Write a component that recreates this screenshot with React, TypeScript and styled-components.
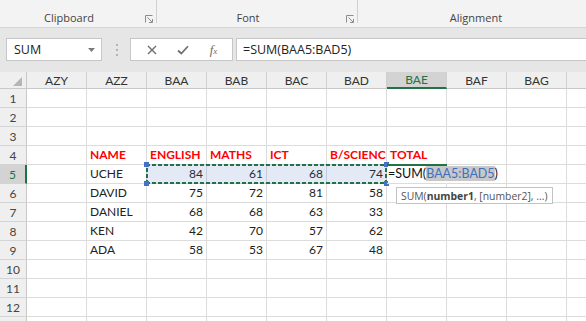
import styled, { createGlobalStyle } from "styled-components";

const GREEN = "#217346";
const GRID = "#dcdcdc";

const GlobalStyle = createGlobalStyle`
  html, body { margin: 0; padding: 0; }
  body {
    width: 586px;
    height: 321px;
    overflow: hidden;
    background: #ffffff;
    font-family: Lato, "Liberation Sans", sans-serif;
  }
`;

const Window = styled.div`
  width: 586px;
  height: 321px;
  overflow: hidden;
  display: flex;
  flex-direction: column;
  background: #e6e6e6;
`;

const Ribbon = styled.div`
  flex: 0 0 28px;
  box-sizing: border-box;
  display: flex;
  background: #f3f3f3;
  border-bottom: 1px solid #d5d5d5;
  font-family: "Open Sans", "Liberation Sans", sans-serif;
  font-size: 11px;
  color: #444;
`;

const Group = styled.div<{ $width: number }>`
  flex: 0 0 ${(p) => p.$width}px;
  position: relative;
  box-sizing: border-box;
  display: flex;
  align-items: flex-end;
  justify-content: center;
  padding: 0 18px 2px 0;
`;

const GroupDivider = styled.div`
  flex: 0 0 1px;
  height: 23px;
  background: #d0d0d0;
`;

const Launcher = styled.svg`
  position: absolute;
  right: 3px;
  bottom: 4px;
`;

const FormulaBand = styled.div`
  flex: 0 0 44px;
  box-sizing: border-box;
  display: flex;
  align-items: center;
  padding: 10px 0 11px 6px;
  font-family: "Open Sans", "Liberation Sans", sans-serif;
  font-size: 12.5px;
  color: #222;
`;

const NameBox = styled.div`
  flex: 0 0 96px;
  height: 23px;
  box-sizing: border-box;
  display: flex;
  align-items: center;
  justify-content: space-between;
  padding: 0 6px 0 7px;
  background: #fff;
  border: 1px solid #c6c6c6;
`;

const Dots = styled.div`
  display: flex;
  flex-direction: column;
  gap: 3px;
  margin: 0 12px 0 14px;
  span {
    width: 2px;
    height: 2px;
    background: #b4b4b4;
  }
`;

const ButtonBox = styled.div`
  flex: 0 0 103px;
  height: 23px;
  box-sizing: border-box;
  display: flex;
  align-items: center;
  padding-left: 5px;
  background: #fff;
  border: 1px solid #c6c6c6;
`;

const IconSlot = styled.div`
  flex: 0 0 31px;
  display: flex;
  align-items: center;
  justify-content: center;
  color: #6d6d6d;
`;

const Fx = styled.span`
  font-family: "Liberation Serif", serif;
  font-style: italic;
  font-size: 13px;
  color: #6d6d6d;
  small {
    font-size: 9px;
  }
`;

const FormulaInput = styled.div`
  flex: 1;
  height: 23px;
  box-sizing: border-box;
  display: flex;
  align-items: center;
  margin-left: 3px;
  padding-left: 6px;
  background: #fff;
  border: 1px solid #c6c6c6;
  border-right: none;
  white-space: nowrap;
`;

const Sheet = styled.div`
  flex: 1;
  position: relative;
  display: grid;
  grid-template-columns: 27px repeat(10, 60px);
  grid-template-rows: 17px repeat(13, 19px);
  background: #fff;
  overflow: hidden;
  font-family: Lato, "Liberation Sans", sans-serif;
  font-size: 12px;
`;

const Corner = styled.div`
  position: relative;
  background: #efefef;
  border-right: 1px solid #c8c8c8;
  border-bottom: 1px solid #c8c8c8;
  &::after {
    content: "";
    position: absolute;
    right: 4px;
    bottom: 2px;
    width: 9px;
    height: 9px;
    background: #b5b5b5;
    clip-path: polygon(100% 0, 100% 100%, 0 100%);
  }
`;

const ColHead = styled.div<{ $active?: boolean }>`
  box-sizing: border-box;
  display: flex;
  align-items: center;
  justify-content: center;
  background: ${(p) => (p.$active ? "#d3d3d3" : "#efefef")};
  color: ${(p) => (p.$active ? GREEN : "#333")};
  border-right: 1px solid #cfcfcf;
  border-bottom: ${(p) => (p.$active ? `2px solid ${GREEN}` : "1px solid #c8c8c8")};
`;

const RowHead = styled.div<{ $active?: boolean }>`
  box-sizing: border-box;
  display: flex;
  align-items: center;
  justify-content: center;
  padding-top: 1px;
  background: ${(p) => (p.$active ? "#d3d3d3" : "#efefef")};
  color: ${(p) => (p.$active ? GREEN : "#444")};
  border-right: ${(p) => (p.$active ? `2px solid ${GREEN}` : "1px solid #c8c8c8")};
  border-bottom: 1px solid #d4d4d4;
`;

const Cell = styled.div<{ $align?: "left" | "right"; $label?: boolean }>`
  box-sizing: border-box;
  padding: 0 3px;
  line-height: 18px;
  border-right: 1px solid ${GRID};
  border-bottom: 1px solid ${GRID};
  white-space: nowrap;
  overflow: hidden;
  text-align: ${(p) => p.$align ?? "left"};
  color: ${(p) => (p.$label ? "#ff0000" : "#222")};
  font-weight: ${(p) => (p.$label ? 700 : 400)};
`;

const EditCell = styled(Cell)`
  position: relative;
  overflow: visible;
  z-index: 3;
  padding-left: 1px;
  border-right-color: transparent;
  &::before {
    content: "";
    position: absolute;
    top: -1px;
    left: 0;
    width: 60px;
    height: 2px;
    background: ${GREEN};
  }
`;

const EditText = styled.span`
  display: inline-block;
  background: #fff;
  font-size: 12.5px;
  line-height: 18px;
  color: #111;
  padding-right: 2px;
`;

const RefText = styled.span`
  color: #3f6fc0;
  background: #c8c8c8;
`;

const Tooltip = styled.div`
  position: absolute;
  top: 22px;
  left: 9px;
  height: 17px;
  box-sizing: border-box;
  padding: 0 4px;
  display: flex;
  align-items: center;
  background: #fff;
  border: 1px solid #c2c2c2;
  font-family: "Open Sans", "Liberation Sans", sans-serif;
  font-size: 10.4px;
  font-weight: 400;
  color: #555;
  white-space: nowrap;
  b {
    font-weight: 700;
    color: #444;
  }
`;

const Selection = styled.div`
  position: absolute;
  grid-column: 4 / 8;
  grid-row: 6 / 7;
  top: -1px;
  left: -1px;
  right: 0;
  bottom: 0;
  z-index: 2;
  pointer-events: none;
  background:
    repeating-linear-gradient(90deg, ${GREEN} 0 4px, transparent 4px 6px) top / 100% 2px no-repeat,
    repeating-linear-gradient(90deg, ${GREEN} 0 4px, transparent 4px 6px) bottom / 100% 2px no-repeat,
    repeating-linear-gradient(0deg, ${GREEN} 0 4px, transparent 4px 6px) left / 2px 100% no-repeat,
    repeating-linear-gradient(0deg, ${GREEN} 0 4px, transparent 4px 6px) right / 2px 100% no-repeat,
    rgba(68, 114, 196, 0.15);
`;

const Handle = styled.span<{ $x: "left" | "right"; $y: "top" | "bottom" }>`
  position: absolute;
  width: 5px;
  height: 5px;
  background: #4472c4;
  ${(p) => p.$x}: -2px;
  ${(p) => p.$y}: -2px;
`;

const columns = ["AZY", "AZZ", "BAA", "BAB", "BAC", "BAD", "BAE", "BAF", "BAG", ""];
const headings = ["NAME", "ENGLISH", "MATHS", "ICT", "B/SCIENCE", "TOTAL"];
const students: [string, number[]][] = [
  ["UCHE", [84, 61, 68, 74]],
  ["DAVID", [75, 72, 81, 58]],
  ["DANIEL", [68, 68, 63, 33]],
  ["KEN", [42, 70, 57, 62]],
  ["ADA", [58, 53, 67, 48]],
];

function LauncherIcon() {
  return (
    <Launcher width="8" height="8" viewBox="0 0 8 8" fill="none" stroke="#8c8c8c" strokeWidth="1">
      <path d="M0.5 7.5V0.5H7.5" />
      <path d="M2.5 2.5L7 7" />
      <path d="M7.5 4V7.5H4" />
    </Launcher>
  );
}

function renderCell(row: number, col: number) {
  const key = `${row}-${col}`;
  if (row === 4 && col >= 1 && col <= 6) {
    return (
      <Cell key={key} $label>
        {headings[col - 1]}
      </Cell>
    );
  }
  if (row >= 5 && row <= 9) {
    const [name, scores] = students[row - 5];
    if (col === 1) return <Cell key={key}>{name}</Cell>;
    if (col >= 2 && col <= 5)
      return (
        <Cell key={key} $align="right">
          {scores[col - 2]}
        </Cell>
      );
    if (col === 6 && row === 5)
      return (
        <EditCell key={key}>
          <EditText>
            =SUM(<RefText>BAA5:BAD5</RefText>)
          </EditText>
          <Tooltip>
            SUM(<b>number1</b>, [number2], ...)
          </Tooltip>
        </EditCell>
      );
  }
  return <Cell key={key} />;
}

export default function App() {
  const rows = Array.from({ length: 13 }, (_, i) => i + 1);
  return (
    <Window>
      <GlobalStyle />
      <Ribbon>
        <Group $width={156}>
          Clipboard
          <LauncherIcon />
        </Group>
        <GroupDivider />
        <Group $width={200}>
          Font
          <LauncherIcon />
        </Group>
        <GroupDivider />
        <Group $width={254}>Alignment</Group>
      </Ribbon>
      <FormulaBand>
        <NameBox>
          SUM
          <svg width="7" height="4" viewBox="0 0 7 4">
            <polygon points="0,0 7,0 3.5,4" fill="#7a7a7a" />
          </svg>
        </NameBox>
        <Dots>
          <span />
          <span />
          <span />
        </Dots>
        <ButtonBox>
          <IconSlot>
            <svg width="10" height="10" viewBox="0 0 10 10" stroke="currentColor" strokeWidth="1.4">
              <path d="M1 1L9 9M9 1L1 9" />
            </svg>
          </IconSlot>
          <IconSlot>
            <svg width="12" height="10" viewBox="0 0 12 10" fill="none" stroke="currentColor" strokeWidth="1.7">
              <path d="M1 5.5L4.3 8.5L11 1.2" />
            </svg>
          </IconSlot>
          <IconSlot>
            <Fx>
              f<small>x</small>
            </Fx>
          </IconSlot>
        </ButtonBox>
        <FormulaInput>=SUM(BAA5:BAD5)</FormulaInput>
      </FormulaBand>
      <Sheet>
        <Corner />
        {columns.map((c, i) => (
          <ColHead key={`h${i}`} $active={c === "BAE"}>
            {c}
          </ColHead>
        ))}
        {rows.map((r) => [
          <RowHead key={`r${r}`} $active={r === 5}>
            {r}
          </RowHead>,
          ...columns.map((_, c) => renderCell(r, c)),
        ])}
        <Selection>
          <Handle $x="left" $y="top" />
          <Handle $x="left" $y="bottom" />
          <Handle $x="right" $y="top" />
          <Handle $x="right" $y="bottom" />
        </Selection>
      </Sheet>
    </Window>
  );
}
